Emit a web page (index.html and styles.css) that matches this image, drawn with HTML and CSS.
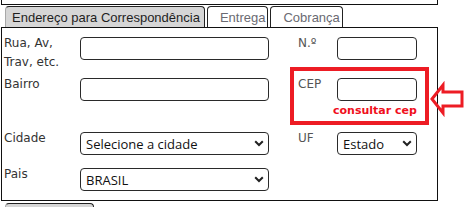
FILE: index.html
```html
<!DOCTYPE html>
<html lang="pt-BR">

<head>
    <meta charset="UTF-8">
    <title>Endereço</title>
    <link rel="stylesheet" href="styles.css">
</head>

<body>
    <div class="prev_box"></div>
    <ul class="tabs clearfix">
        <li class="active">Endereço para Correspondência</li>
        <li>Entrega</li>
        <li>Cobrança</li>
    </ul>
    <div class="panel">
        <form class="addr_form">
            <label class="lbl">Rua, Av, Trav, etc.</label>
            <div class="cell"><input type="text" class="txt txt_long"></div>
            <label class="lbl lbl_r">N.º</label>
            <div class="cell"><input type="text" class="txt txt_short"></div>

            <label class="lbl">Bairro</label>
            <div class="cell"><input type="text" class="txt txt_long"></div>
            <label class="lbl lbl_r">CEP</label>
            <div class="cell cep_cell">
                <input type="text" class="txt txt_short">
                <a href="javascript:;" class="consultar">consultar cep</a>
            </div>

            <label class="lbl">Cidade</label>
            <div class="cell sel sel_long">
                <select><option>Selecione a cidade</option></select>
                <svg class="chev" width="10" height="7" viewBox="0 0 10 7"><path d="M1.2 1.2 L5 5 L8.8 1.2" fill="none" stroke="#222" stroke-width="2"/></svg>
            </div>
            <label class="lbl lbl_r">UF</label>
            <div class="cell sel sel_short">
                <select><option>Estado</option></select>
                <svg class="chev" width="10" height="7" viewBox="0 0 10 7"><path d="M1.2 1.2 L5 5 L8.8 1.2" fill="none" stroke="#222" stroke-width="2"/></svg>
            </div>

            <label class="lbl">Pais</label>
            <div class="cell sel sel_long">
                <select><option>BRASIL</option></select>
                <svg class="chev" width="10" height="7" viewBox="0 0 10 7"><path d="M1.2 1.2 L5 5 L8.8 1.2" fill="none" stroke="#222" stroke-width="2"/></svg>
            </div>
        </form>
        <!-- destaque do cep -->
        <div class="cep_mark"></div>
    </div>
    <ul class="tabs clearfix">
        <li class="active">Observações</li>
    </ul>
    <svg class="pointer" width="38" height="40" viewBox="0 0 38 40">
        <polygon points="3,20 14,6 14,13 33,13 33,27 14,27 14,34" fill="none" stroke="#ed1c24" stroke-width="3" stroke-linejoin="miter"/>
    </svg>
</body>

</html>
```

FILE: styles.css
```css
html,body,ul,li,div,form,input,select,label {
    padding: 0;
    margin: 0;
    box-sizing: border-box;
}
body {
    background: #fff;
    position: relative;
    overflow: hidden;
}
ul {
    list-style: none;
}
.clearfix::before,
.clearfix::after {
    content: "";
    display: block;
    clear: both;
}
.prev_box {
    width: 437px;
    height: 5px;
    margin-left: 1px;
    border: 1px solid #111;
    border-top: none;
}
.tabs {
    display: flex;
    gap: 2px;
    margin: 1px 0 0 3px;
}
.tabs > li {
    height: 21px;
    padding: 2px 2px 0 12px;
    line-height: 18px;
    border: 1px solid #222;
    border-bottom: none;
    border-radius: 4px 4px 0 0;
    font-family: "Liberation Sans", Arial, sans-serif;
    font-size: 13px;
    color: #6a6a72;
    background: #fff;
}
.tabs > li.active {
    padding-left: 6px;
    padding-right: 4px;
    color: #1e1e1e;
    background: #d6d6d6;
    border-left-color: #a8a8a8;
}
.panel {
    position: relative;
    width: 437px;
    margin-left: 1px;
    padding: 6px 0 9px 2px;
    border: 1px solid #111;
}
.addr_form {
    display: grid;
    grid-template-columns: 76px 189px 68px 80px;
    grid-template-rows: 41px 54px 36px auto;
}
.lbl {
    font-family: "DejaVu Sans", Verdana, sans-serif;
    font-size: 12px;
    line-height: 19px;
    color: #333;
}
.lbl_r {
    padding-left: 29px;
    color: #555;
}
.cell {
    padding-top: 3px;
}
.txt {
    display: block;
    height: 23px;
    border: 1px solid #2a2a2a;
    border-radius: 4px;
    background: #fff;
    outline: none;
}
.txt_long {
    width: 189px;
}
.txt_short {
    width: 80px;
}
.cep_cell {
    display: flex;
    flex-direction: column;
}
.consultar {
    display: block;
    margin-top: 3px;
    margin-left: -4px;
    white-space: nowrap;
    font-family: "DejaVu Sans", Verdana, sans-serif;
    font-size: 11px;
    font-weight: bold;
    line-height: 13px;
    color: #f0101c;
    text-decoration: none;
}
.sel {
    position: relative;
}
.sel select {
    display: block;
    height: 23px;
    padding: 0 0 0 5px;
    border: 1px solid #2a2a2a;
    border-radius: 4px;
    background: #fff;
    font-family: "Open Sans", "Noto Sans", sans-serif;
    font-size: 13px;
    color: #111;
    appearance: none;
    -webkit-appearance: none;
    outline: none;
}
.sel_long select {
    width: 189px;
}
.sel_short select {
    width: 80px;
}
.chev {
    position: absolute;
    right: 5px;
    top: 11px;
}
.cep_mark {
    position: absolute;
    left: 288px;
    top: 39px;
    width: 139px;
    height: 58px;
    border: 4px solid #ed1c24;
}
.tabs + .pointer {
    display: block;
}
.pointer {
    position: absolute;
    left: 429px;
    top: 79px;
}
.tabs:last-of-type {
    margin-top: 2px;
}
```
